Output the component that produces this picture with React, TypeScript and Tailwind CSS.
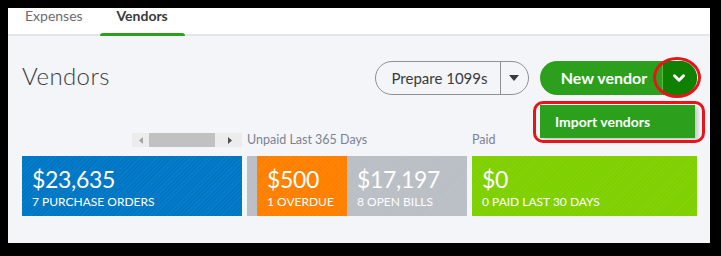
import { ChevronDown } from 'lucide-react'

const stripes =
  'bg-[repeating-linear-gradient(135deg,rgba(255,255,255,0.045)_0px,rgba(255,255,255,0.045)_1px,transparent_1px,transparent_3px)]'

function Tabs() {
  return (
    <div className="flex h-[28px] items-end border-b-2 border-[#e3e5e8] bg-white pl-[17px]">
      <div className="pb-[8px] text-[14px] text-[#6b6c72]">Expenses</div>
      <div className="relative ml-[17px] flex w-[85px] justify-center pb-[8px] text-[14px] font-bold text-[#393a3d]">
        Vendors
        <span className="absolute -bottom-[2px] left-0 h-[3px] w-full rounded-t-sm bg-[#2ca01c]" />
      </div>
    </div>
  )
}

function Header() {
  return (
    <div className="mt-[25px] flex items-center justify-between pl-[14px] pr-[13px]">
      <h1 className="-mt-[4px] text-[24px] font-light tracking-[0.4px] text-[#393a3d]">Vendors</h1>
      <div className="flex items-center gap-[11px]">
        <div className="flex h-[34px] w-[154px] items-center rounded-full border border-[#8d9096] bg-[#f4f5f8]">
          <span className="flex-1 pl-[3px] text-center text-[15px] text-[#393a3d]">Prepare 1099s</span>
          <span className="h-full w-px bg-[#8d9096]" />
          <span className="flex w-[27px] justify-center pr-[2px]">
            <svg width="10" height="6" viewBox="0 0 10 6">
              <path d="M0 0h10L5 6z" fill="#393a3d" />
            </svg>
          </span>
        </div>
        <div className="relative">
          <div className="flex h-[34px] w-[157px] items-center overflow-hidden rounded-full bg-[#2ca01c]">
            <span className="flex-1 pl-[6px] text-center text-[16px] font-bold text-white">New vendor</span>
            <span className="flex h-full w-[35px] items-center justify-center border-l border-[#5cb84d] bg-[#108000] pr-[3px]">
              <ChevronDown size={18} strokeWidth={4} color="white" />
            </span>
          </div>
          {/* red annotation round the arrow */}
          <span className="absolute -top-[4px] left-[113px] h-[41px] w-[48px] rounded-[50%] border-[3px] border-[#e8141c]" />
          {/* open menu */}
          <div className="absolute left-0 top-[44px] flex h-[33px] w-[155px] items-center bg-[#2ca01c] pl-[15px] text-[14px] font-bold text-white shadow-[3px_2px_4px_rgba(0,0,0,0.18)]">
            Import vendors
          </div>
          <span className="absolute -left-[7px] top-[40px] h-[42px] w-[172px] rounded-[10px] border-[3px] border-[#e8141c]" />
        </div>
      </div>
    </div>
  )
}

function ScrollWidget() {
  return (
    <div className="flex h-[14px] w-[110px] items-center bg-[#ececec]">
      <span className="flex w-[17px] justify-center">
        <svg width="4" height="7" viewBox="0 0 4 7">
          <path d="M4 0v7L0 3.5z" fill="#a3a3a3" />
        </svg>
      </span>
      <span className="h-[14px] w-[66px] bg-[#c1c1c1]" />
      <span className="flex flex-1 justify-center pl-[2px]">
        <svg width="4" height="7" viewBox="0 0 4 7">
          <path d="M0 0v7L4 3.5z" fill="#505050" />
        </svg>
      </span>
    </div>
  )
}

function Card({ amount, label, className }: { amount: string; label: string; className: string }) {
  return (
    <div className={`h-[60px] pl-[10px] pt-[9px] text-white ${className} ${stripes}`}>
      <div className="text-[23px] leading-[28px] tracking-[-0.3px]">{amount}</div>
      <div className="mt-[1px] text-[12px] leading-[16px]">{label}</div>
    </div>
  )
}

function Summary() {
  return (
    <div className="mt-[38px] pl-[14px] pr-[13px]">
      <div className="flex h-[14px] items-center gap-[5px] text-[12.5px] text-[#7c8295]">
        <div className="flex w-[220px] justify-end">
          <ScrollWidget />
        </div>
        <div className="w-[220px]">Unpaid Last 365 Days</div>
        <div className="flex-1">Paid</div>
      </div>
      <div className="mt-[9px] flex gap-[5px]">
        <Card amount="$23,635" label="7 PURCHASE ORDERS" className="w-[220px] bg-[#0077c5]" />
        <div className={`flex w-[220px] bg-[#babec5] pl-[10px] ${stripes}`}>
          <Card amount="$500" label="1 OVERDUE" className="w-[90px] bg-[#ff8000]" />
          <Card amount="$17,197" label="8 OPEN BILLS" className="flex-1 bg-[#babec5]" />
        </div>
        <Card amount="$0" label="0 PAID LAST 30 DAYS" className="flex-1 bg-[#7fd000]" />
      </div>
    </div>
  )
}

export default function App() {
  return (
    <div className="h-[256px] w-[721px] bg-black pl-[8px] pt-[8px]" style={{ fontFamily: 'Lato, "Open Sans", sans-serif' }}>
      <div className="h-[235px] w-[702px] bg-[#f4f5f8]">
        <Tabs />
        <Header />
        <Summary />
      </div>
    </div>
  )
}
